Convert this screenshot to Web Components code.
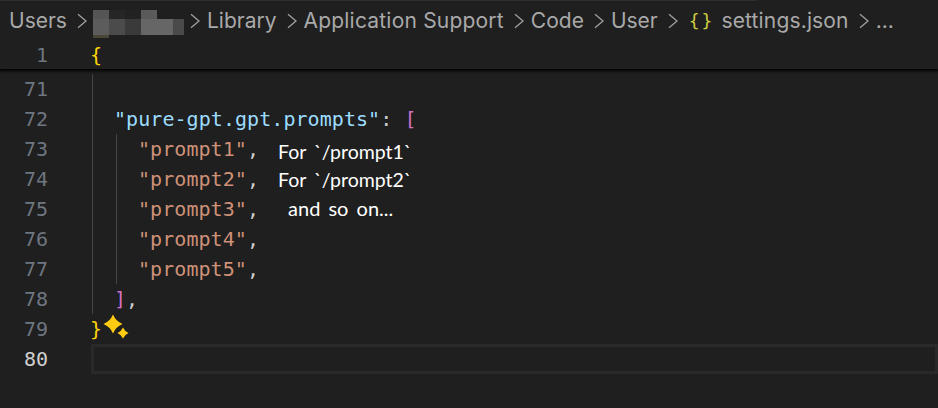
<!DOCTYPE html>
<html>
<head>
<meta charset="utf-8">
<style>
  html, body { margin: 0; background: #1f1f1f; }
  body { width: 938px; height: 408px; overflow: hidden; }
  vs-line i { font-style: normal; }
  vs-line i.y { color: #ffd60a; }
  vs-line i.k { color: #9cdcfe; }
  vs-line i.s { color: #ce9178; }
  vs-line i.m { color: #d16fc4; }
</style>
</head>
<body>
<vs-editor>
  <vs-breadcrumbs slot="crumbs">
    <vs-crumb>Users</vs-crumb>
    <vs-crumb><vs-mosaic></vs-mosaic></vs-crumb>
    <vs-crumb>Library</vs-crumb>
    <vs-crumb style="letter-spacing:.2px">Application Support</vs-crumb>
    <vs-crumb>Code</vs-crumb>
    <vs-crumb>User</vs-crumb>
    <vs-crumb json style="letter-spacing:.15px">settings.json</vs-crumb>
    <vs-crumb last>...</vs-crumb>
  </vs-breadcrumbs>
  <vs-line slot="sticky" num="1"><i class="y">{</i></vs-line>

  <vs-line num="71" indent="1"></vs-line>
  <vs-line num="72" indent="1"><i class="k">"pure-gpt.gpt.prompts"</i>: <i class="m">[</i></vs-line>
  <vs-line num="73" indent="2"><i class="s">"prompt1"</i>,<vs-note slot="note">For `/prompt1`</vs-note></vs-line>
  <vs-line num="74" indent="2"><i class="s">"prompt2"</i>,<vs-note slot="note" style="margin-top:-2px">For `/prompt2`</vs-note></vs-line>
  <vs-line num="75" indent="2"><i class="s">"prompt3"</i>,<vs-note slot="note" inset style="margin-top:-3px">and so on...</vs-note></vs-line>
  <vs-line num="76" indent="2"><i class="s">"prompt4"</i>,</vs-line>
  <vs-line num="77" indent="2"><i class="s">"prompt5"</i>,</vs-line>
  <vs-line num="78" indent="1"><i class="m">]</i>,</vs-line>
  <vs-line num="79"><i class="y">}</i><vs-sparkle slot="note"></vs-sparkle></vs-line>
  <vs-line num="80" current></vs-line>
</vs-editor>

<script>
class VsEditor extends HTMLElement {
  constructor() {
    super();
    this.attachShadow({ mode: "open" });
    this.shadowRoot.innerHTML = `
      <style>
        :host { display: block; width: 938px; height: 408px; background: #1f1f1f; overflow: hidden; }
        .top { box-sizing: border-box; height: 69px; box-shadow: 0 1px 3px 1px #000; position: relative; }
        .rule { height: 1px; width: 757px; background: #2e2e2e; }
        .body { padding-top: 5px; }
      </style>
      <div class="top">
        <div class="rule"></div>
        <slot name="crumbs"></slot>
        <slot name="sticky"></slot>
      </div>
      <div class="body"><slot></slot></div>
    `;
  }
}

class VsBreadcrumbs extends HTMLElement {
  constructor() {
    super();
    this.attachShadow({ mode: "open" });
    this.shadowRoot.innerHTML = `
      <style>
        :host {
          display: flex;
          align-items: center;
          height: 39px;
          padding-left: 9px;
          font: 21px Inter, "Liberation Sans", sans-serif;
          color: #a9a9a9;
          white-space: nowrap;
        }
      </style>
      <slot></slot>
    `;
  }
}

class VsCrumb extends HTMLElement {
  constructor() {
    super();
    this.attachShadow({ mode: "open" });
    const json = this.hasAttribute("json");
    const last = this.hasAttribute("last");
    this.shadowRoot.innerHTML = `
      <style>
        :host { display: inline-flex; align-items: center; }
        svg { display: block; }
        .chev { margin: 0 7px 0 10px; }
        .ico { margin: 0 7px 0 4px; color: #cbcb41; font: 18px "DejaVu Sans Mono", monospace; letter-spacing: 2px; }
      </style>
      ${json ? `<span class="ico">{}</span>` : ""}
      <slot></slot>
      ${last ? "" : `<svg class="chev" width="10" height="16" viewBox="0 0 10 16" fill="none" stroke="#a0a0a0" stroke-width="1.3"><path d="M1 1.200 9 8l-8 6.800"/></svg>`}
    `;
  }
}

// blurred out user name in the path
class VsMosaic extends HTMLElement {
  constructor() {
    super();
    this.attachShadow({ mode: "open" });
    const cols = [
      ["#555555", "#5c5c5c", "#4a4636"],
      ["#262626", "#4b4b4b", "#1f1f1f"],
      ["#222222", "#3a3a3a", "#1f1f1f"],
      ["#5a5a5a", "#666666", "#1f1f1f"],
      ["#1f1f1f", "#666666", "#1f1f1f"],
      ["#1f1f1f", "#4a4a4a", "#1f1f1f"],
    ];
    this.shadowRoot.innerHTML = `
      <style>
        :host {
          display: grid;
          grid-auto-flow: column;
          grid-template-columns: repeat(5, 16px) 11px;
          grid-template-rows: 9px 16px 3px;
          margin: 7px -4px 0 -1px;
        }
      </style>
      ${cols.flat().map(c => `<b style="background:${c}"></b>`).join("")}
    `;
  }
}

class VsLine extends HTMLElement {
  constructor() {
    super();
    this.attachShadow({ mode: "open" });
    const num = this.getAttribute("num");
    const indent = parseInt(this.getAttribute("indent") || "0");
    const current = this.hasAttribute("current");
    this.shadowRoot.innerHTML = `
      <style>
        :host {
          display: flex;
          height: 30px;
          font: 20px/30px "DejaVu Sans Mono", monospace;
          color: #cccccc;
        }
        .num { width: 48px; margin-right: 43px; text-align: right; color: ${current ? "#cfcfcf" : "#6e7681"}; }
        .code { flex: 1; display: flex; padding-left: 1px; ${current ? "box-shadow: inset 0 0 0 3px #292929;" : ""} }
        .guide { width: 23px; border-left: 1px solid #444; flex: none; }
        .text { white-space: pre; margin-left: -2px; margin-right: 2px; letter-spacing: .06px; }
      </style>
      <div class="num">${num}</div>
      <div class="code">${'<span class="guide"></span>'.repeat(indent)}<span class="text"><slot></slot></span><slot name="note"></slot></div>
    `;
  }
}

class VsNote extends HTMLElement {
  constructor() {
    super();
    this.attachShadow({ mode: "open" });
    const inset = this.hasAttribute("inset");
    this.shadowRoot.innerHTML = `
      <style>
        :host {
          display: block;
          margin-left: ${inset ? 27 : 17}px;
          font: 400 ${inset ? 20 : 19.5}px/35px Lato, sans-serif;
          word-spacing: 3px;
          color: #ffffff;
          white-space: nowrap;
        }
      </style>
      <slot></slot>
    `;
  }
}

class VsSparkle extends HTMLElement {
  constructor() {
    super();
    this.attachShadow({ mode: "open" });
    this.shadowRoot.innerHTML = `
      <style>
        :host { display: block; margin-left: -1px; }
        svg { display: block; }
      </style>
      <svg width="26" height="30" viewBox="0 0 26 30" fill="#ffcc12">
        <path d="M10 .5Q12.800 7.200 19.500 10 12.800 12.800 10 19.500 7.200 12.800 .5 10 7.200 7.200 10 .5Z"/>
        <path d="M20 13.500Q21.700 17.300 25.500 19 21.700 20.700 20 24.500 18.300 20.700 14.500 19 18.300 17.300 20 13.500Z"/>
      </svg>
    `;
  }
}

customElements.define("vs-editor", VsEditor);
customElements.define("vs-breadcrumbs", VsBreadcrumbs);
customElements.define("vs-crumb", VsCrumb);
customElements.define("vs-mosaic", VsMosaic);
customElements.define("vs-line", VsLine);
customElements.define("vs-note", VsNote);
customElements.define("vs-sparkle", VsSparkle);
</script>
</body>
</html>
